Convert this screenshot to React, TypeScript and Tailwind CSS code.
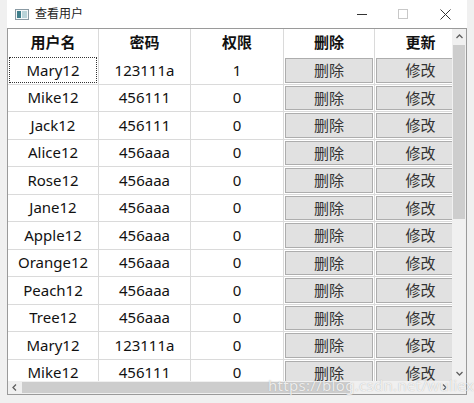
import React from 'react'

const rows: [string, string, string][] = [
  ['Mary12', '123111a', '1'],
  ['Mike12', '456111', '0'],
  ['Jack12', '456111', '0'],
  ['Alice12', '456aaa', '0'],
  ['Rose12', '456aaa', '0'],
  ['Jane12', '456aaa', '0'],
  ['Apple12', '456aaa', '0'],
  ['Orange12', '456aaa', '0'],
  ['Peach12', '456aaa', '0'],
  ['Tree12', '456aaa', '0'],
  ['Mary12', '123111a', '0'],
  ['Mike12', '456111', '0'],
  ['Jack12', '456111', '0'],
]

const cols = 'grid grid-cols-[91px_92px_93px_91px_92px]'

function WinIcon() {
  return (
    <svg width="14" height="11" viewBox="0 0 14 11">
      <rect x="0.5" y="0.5" width="13" height="10" fill="#f4f7f8" stroke="#8a9aa3" />
      <rect x="2" y="2" width="4" height="7" fill="#3f7f8c" />
      <rect x="7" y="2" width="5" height="7" fill="#b9d3d8" />
    </svg>
  )
}

function TitleBar() {
  return (
    <div className="flex h-[28px] items-center bg-white pl-[8px] text-[12px] text-[#222]">
      <WinIcon />
      <span className="ml-[6px]">查看用户</span>
      <div className="ml-auto flex h-full items-center">
        <div className="flex h-full w-[41px] items-center justify-center">
          <div className="h-px w-[10px] bg-[#333]" />
        </div>
        <div className="flex h-full w-[41px] items-center justify-center">
          <div className="h-[10px] w-[10px] border border-[#c8c8c8]" />
        </div>
        <div className="flex h-full w-[44px] items-center justify-center">
          <svg width="11" height="11" viewBox="0 0 11 11">
            <path d="M0.5 0.5 L10.5 10.5 M10.5 0.5 L0.5 10.5" stroke="#333" strokeWidth="1" />
          </svg>
        </div>
      </div>
    </div>
  )
}

function Btn({ label }: { label: string }) {
  return (
    <div className="h-full border-r border-b border-[#dadada] pt-[2px] pr-[1px] pl-px pb-px">
      <div className="flex h-full items-center justify-center border border-[#adadad] bg-[#e1e1e1] text-[#333]">
        {label}
      </div>
    </div>
  )
}

function Table() {
  return (
    <div className="w-[459px] text-[15px] text-[#111]">
      <div className={`${cols} h-[27px] font-bold`}>
        {['用户名', '密码', '权限', '删除', '更新'].map((h) => (
          <div key={h} className="flex items-center justify-center border-r border-[#dadada]">
            {h}
          </div>
        ))}
      </div>
      {rows.map(([name, pwd, perm], i) => (
        <div key={i} className={`${cols} h-[27.5px]`}>
          <div className="border-r border-b border-[#dadada] p-px">
            <div
              className={`flex h-full items-center justify-center ${
                i === 0 ? 'border border-dotted border-[#333]' : ''
              }`}
            >
              {name}
            </div>
          </div>
          <div className="flex items-center justify-center border-r border-b border-[#dadada]">{pwd}</div>
          <div className="flex items-center justify-center border-r border-b border-[#dadada]">{perm}</div>
          <Btn label="删除" />
          <Btn label="修改" />
        </div>
      ))}
    </div>
  )
}

function Chevron({ dir }: { dir: 'up' | 'down' | 'left' | 'right' }) {
  const d = {
    up: 'M1.5 5 L4.5 2 L7.5 5',
    down: 'M1.5 3 L4.5 6 L7.5 3',
    left: 'M5 1.5 L2 4.5 L5 7.5',
    right: 'M3 1.5 L6 4.5 L3 7.5',
  }[dir]
  return (
    <svg width="9" height="9" viewBox="0 0 9 9">
      <path d={d} fill="none" stroke="#606060" strokeWidth="1.3" />
    </svg>
  )
}

export default function App() {
  return (
    <div
      className="relative h-[403px] w-[474px] overflow-hidden bg-[#f0f0f0]"
      style={{ fontFamily: '"Noto Sans", "Noto Sans CJK SC", sans-serif' }}
    >
      <div className="ml-[7px] flex h-[395px] w-[460px] flex-col">
        <TitleBar />
        <div className="grid min-h-0 flex-1 grid-cols-[minmax(0,1fr)_14px] grid-rows-[minmax(0,1fr)_13px] border border-[#9a9a9a] bg-white">
          <div className="min-h-0 overflow-hidden">
            <Table />
          </div>
          <div className="flex flex-col bg-[#f0f0f0]">
            <div className="flex h-[16px] items-center justify-center">
              <Chevron dir="up" />
            </div>
            <div className="mx-px h-[174px] bg-[#cdcdcd]" />
            <div className="flex-1" />
            <div className="flex h-[16px] items-center justify-center">
              <Chevron dir="down" />
            </div>
          </div>
          <div className="flex bg-[#f0f0f0]">
            <div className="flex w-[14px] items-center justify-center">
              <Chevron dir="left" />
            </div>
            <div className="my-px w-[328px] bg-[#cdcdcd]" />
            <div className="flex-1" />
            <div className="flex w-[15px] items-center justify-center">
              <Chevron dir="right" />
            </div>
          </div>
          <div className="bg-[#f0f0f0]" />
        </div>
      </div>
      <div className="pointer-events-none absolute top-[374px] left-[268px] text-[15px] tracking-[0.3px] text-white/80 [text-shadow:0_0_1px_rgba(120,120,120,0.6)]">
        https://blog.csdn.net/wuliexia
      </div>
    </div>
  )
}
